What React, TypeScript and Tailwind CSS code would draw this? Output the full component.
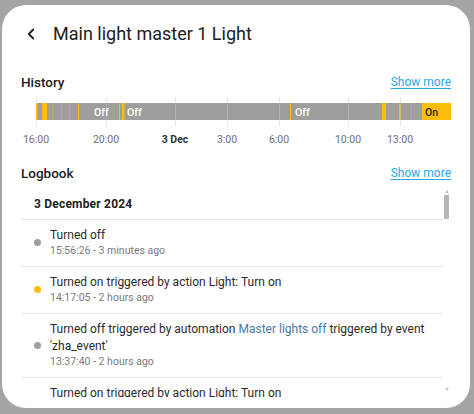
import { ChevronLeft } from 'lucide-react';

const GREY = '#9e9e9e';
const YELLOW = '#fdbd0c';

// bar segments in svg coords (bar runs 15..430)
const marks: { x: number; w: number; faint?: boolean }[] = [
  { x: 15, w: 1.5 },
  { x: 21, w: 5 },
  { x: 31, w: 1, faint: true },
  { x: 40, w: 1, faint: true },
  { x: 48, w: 1, faint: true },
  { x: 57, w: 1 },
  { x: 98, w: 1 },
  { x: 101, w: 2.5 },
  { x: 269, w: 1 },
  { x: 361, w: 4 },
  { x: 378, w: 1.5 },
  { x: 390, w: 1, faint: true },
  { x: 401, w: 29 },
];

const ticks = [
  { x: 15, label: '16:00' },
  { x: 85, label: '20:00' },
  { x: 154, label: '3 Dec', bold: true },
  { x: 206, label: '3:00' },
  { x: 258, label: '6:00' },
  { x: 327, label: '10:00' },
  { x: 379, label: '13:00' },
];

const HistoryChart = () => (
  <svg width="430" height="52" viewBox="0 0 430 52" className="block">
    {ticks.map((t) => (
      <line key={t.label} x1={t.x + 0.5} x2={t.x + 0.5} y1={2} y2={31} stroke="#e4e4e4" strokeWidth={1} />
    ))}
    <rect x={15} y={8} width={415} height={17} fill={GREY} />
    {ticks.map((t) => (
      <line key={'g' + t.label} x1={t.x + 0.5} x2={t.x + 0.5} y1={8} y2={25} stroke="#b4b4b4" strokeWidth={1} />
    ))}
    {marks.map((m, i) => (
      <rect key={i} x={m.x} y={8} width={m.w} height={17} fill={YELLOW} opacity={m.faint ? 0.35 : 1} />
    ))}
    <g fontFamily="Roboto, sans-serif" fontSize="10.5" fontWeight="500">
      <text x={73} y={20.5} fill="#fff">Off</text>
      <text x={106} y={20.5} fill="#fff">Off</text>
      <text x={274} y={20.5} fill="#fff">Off</text>
      <text x={404} y={20.5} fill="#222">On</text>
    </g>
    <g fontFamily="Roboto, sans-serif" fontSize="10.5" textAnchor="middle">
      {ticks.map((t) => (
        <text key={'l' + t.label} x={t.x} y={48} fill={t.bold ? '#333' : '#6f6f6f'} fontWeight={t.bold ? 700 : 400}>
          {t.label}
        </text>
      ))}
    </g>
  </svg>
);

const Dot = ({ on }: { on?: boolean }) => (
  <span className={`w-[7px] h-[7px] rounded-full shrink-0 ${on ? 'bg-[#fdbd0c]' : 'bg-[#9e9e9e]'}`} />
);

const entries = [
  { on: false, text: <>Turned off</>, time: '15:56:26 - 3 minutes ago' },
  { on: true, text: <>Turned on triggered by action Light: Turn on</>, time: '14:17:05 - 2 hours ago' },
  {
    on: false,
    text: (
      <>
        Turned off triggered by automation <span className="text-[#4a78a8]">Master lights off</span> triggered by event
        'zha_event'
      </>
    ),
    time: '13:37:40 - 2 hours ago',
  },
  { on: true, text: <>Turned on triggered by action Light: Turn on</>, time: '13:20:11 - 2 hours ago' },
];

export default function App() {
  return (
    <div className="w-[474px] h-[414px] bg-[#a4a4a4] overflow-hidden pt-[5px] pl-[2px] font-['Roboto',sans-serif]">
      <div className="w-[468px] h-[403px] rounded-[24px] bg-white flex flex-col overflow-hidden">
        {/* Header */}
        <div className="h-[58px] shrink-0 flex items-center pl-[20px]">
          <ChevronLeft size={18} strokeWidth={2.5} className="text-[#222]" />
          <h2 className="ml-[13px] text-[18px] leading-6 text-[#212121]">Main light master 1 Light</h2>
        </div>

        <div className="px-[19px] flex flex-col">
          {/* History */}
          <div className="mt-[9px] h-5 flex items-center justify-between">
            <span className="text-[13.5px] font-medium text-[#212121]">History</span>
            <a className="text-[12px] text-[#2aa7e6] underline underline-offset-2">Show more</a>
          </div>
          <div className="mt-[3px]">
            <HistoryChart />
          </div>

          {/* Logbook */}
          <div className="mt-[16px] h-5 flex items-center justify-between">
            <span className="text-[13.5px] font-medium text-[#212121]">Logbook</span>
            <a className="text-[12px] text-[#2aa7e6] underline underline-offset-2">Show more</a>
          </div>

          <div className="relative mt-[6px] h-[208px] overflow-hidden pr-[8px]">
            <div className="h-[31px] flex items-center pl-[13px] border-b border-[#e6e6e6] text-[12px] font-bold text-[#212121] tracking-[0.2px]">
              3 December 2024
            </div>
            {entries.map((e, i) => (
              <div key={i} className="flex items-center border-b border-[#e6e6e6] pt-[7px] pb-[8px]">
                <div className="w-[29px] flex justify-center pl-[3px]">
                  <Dot on={e.on} />
                </div>
                <div className="flex-1">
                  <div className="text-[12px] leading-[17px] text-[#2b2b2b]">{e.text}</div>
                  <div className="text-[10.5px] leading-[14px] text-[#7a7a7a]">{e.time}</div>
                </div>
              </div>
            ))}
            {/* scrollbar */}
            <div className="absolute right-[2px] top-0 bottom-0 w-[5px]">
              <div className="mx-auto mt-[1px] w-0 h-0 border-x-[2px] border-x-transparent border-b-[3px] border-b-[#c4c4c4]" />
              <div className="mt-[2px] h-[24px] w-[5px] bg-[#b6b6b6]" />
              <div className="absolute bottom-[6px] left-[0.5px] w-0 h-0 border-x-[2px] border-x-transparent border-t-[3px] border-t-[#c4c4c4]" />
            </div>
          </div>
        </div>
      </div>
    </div>
  );
}
